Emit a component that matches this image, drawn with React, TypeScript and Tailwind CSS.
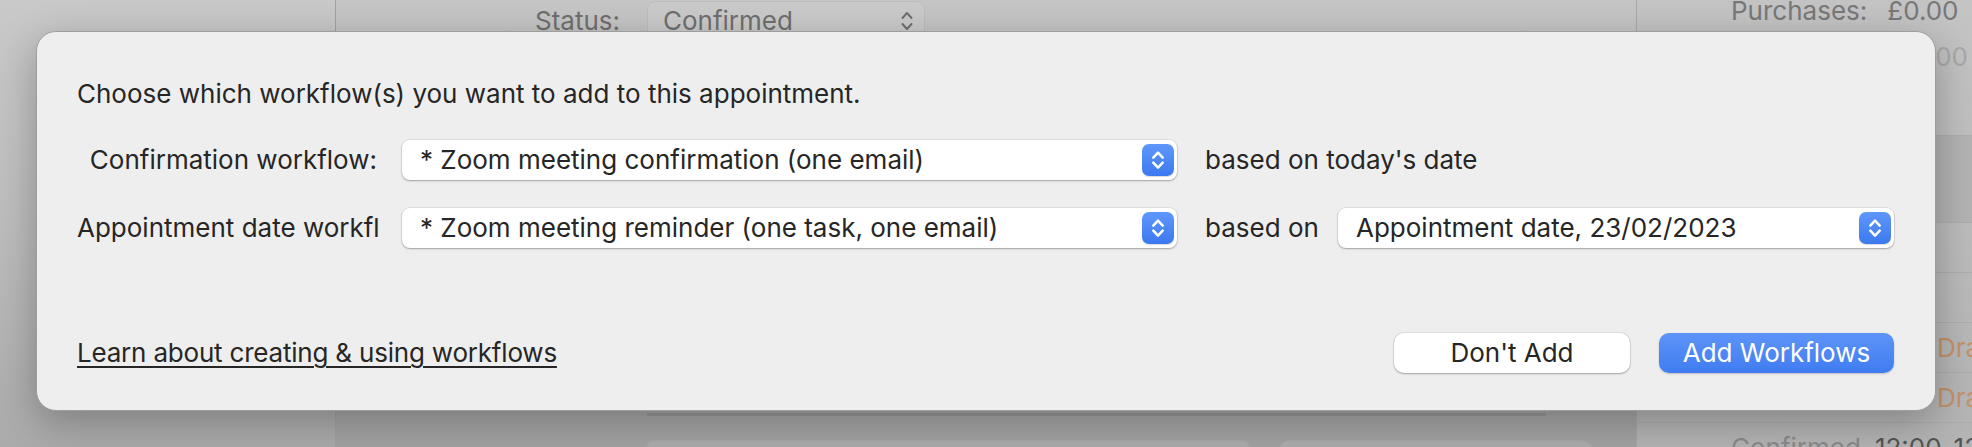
import { FC, ReactNode } from "react";

const Stepper: FC = () => (
    <div className="flex h-[32px] w-[32px] items-center justify-center rounded-[7px] bg-gradient-to-b from-[#5f97fa] to-[#3c79ef] shadow-[0_1px_1px_rgba(0,0,0,0.15)]">
        <svg width="32" height="32" viewBox="0 0 32 32" fill="none">
            <path
                d="M11.3 13.6 L16 8.6 L20.7 13.6"
                stroke="white"
                strokeWidth="2.5"
                strokeLinecap="round"
                strokeLinejoin="round"
            />
            <path
                d="M11.3 18.6 L16 23.6 L20.7 18.6"
                stroke="white"
                strokeWidth="2.5"
                strokeLinecap="round"
                strokeLinejoin="round"
            />
        </svg>
    </div>
);

const PopUp: FC<{ value: string; className?: string }> = ({ value, className }) => (
    <div
        className={`flex h-[40px] shrink-0 items-center justify-between rounded-[8px] bg-white pl-[18px] pr-[3px] shadow-[0_0_0_1px_rgba(0,0,0,0.06),0_1px_2px_rgba(0,0,0,0.28)] ${className ?? ""}`}
    >
        <span className="whitespace-nowrap">{value}</span>
        <Stepper />
    </div>
);

const Label: FC<{ children: ReactNode }> = ({ children }) => (
    <div className="w-[303px] shrink-0 overflow-hidden whitespace-nowrap pr-[3px] text-right">
        {children}
    </div>
);

const Backdrop: FC = () => (
    <div className="flex h-full w-full">
        {/* sidebar */}
        <div className="h-full w-[336px] shrink-0 border-r border-[#a2a2a2] bg-gradient-to-b from-[#c9c9c9] via-[#bdbdbd] to-[#ababab]" />

        {/* main window */}
        <div className="flex h-full w-[1300px] shrink-0 flex-col overflow-hidden bg-gradient-to-b from-[#c6c6c6] via-[#b9b9b9] to-[#a3a3a3] pl-[311px]">
            <div className="relative flex h-[41px] shrink-0 items-center">
                <span className="absolute right-[100%] mr-[27px] whitespace-nowrap text-[#6f6f6f]">
                    Status:
                </span>
                <div className="mt-[1px] flex h-[40px] w-[278px] items-center justify-between rounded-[8px] border border-[#bdbdbd] bg-[#cacaca] pl-[15px] pr-[10px] text-[#6f6f6f]">
                    <span>Confirmed</span>
                    <svg width="14" height="24" viewBox="0 0 14 24" fill="none">
                        <path d="M2.5 9 L7 4 L11.5 9" stroke="#6f6f6f" strokeWidth="2" strokeLinecap="round" strokeLinejoin="round" />
                        <path d="M2.5 15 L7 20 L11.5 15" stroke="#6f6f6f" strokeWidth="2" strokeLinecap="round" strokeLinejoin="round" />
                    </svg>
                </div>
            </div>
            <div className="h-[375px] w-[899px] shrink-0 border-b-[3px] border-[#979797]" />
            <div className="mt-[24px] flex shrink-0 gap-[30px]">
                <div className="h-[30px] w-[602px] rounded-t-[6px] border border-[#a9a9a9] bg-[#adadad]" />
                <div className="h-[30px] w-[313px] rounded-t-[10px] border border-[#a9a9a9] bg-[#adadad]" />
            </div>
        </div>

        {/* inspector */}
        <div className="flex h-full min-w-0 flex-1 flex-col overflow-hidden border-l border-[#a9a9a9] bg-gradient-to-b from-[#c4c4c4] to-[#b4b4b4]">
            <div className="h-[135px] shrink-0 pl-[94px]">
                <div className="-mt-[5px] flex h-[32px] items-center whitespace-nowrap text-[#787878]">
                    <span>Purchases:</span>
                    <span className="ml-[20px]">£0.00</span>
                </div>
                <div className="mt-[14px] flex h-[32px] items-center justify-end whitespace-nowrap pr-[4px] text-[#a8a8a8]">
                    £0.00
                </div>
            </div>
            <div className="h-[87px] shrink-0 border-t border-[#adadad] bg-[#b3b3b3]" />
            <div className="h-[50px] shrink-0 border-t border-[#adadad]" />
            <div className="h-[50px] shrink-0 border-t border-[#adadad]" />
            <div className="flex h-[50px] shrink-0 items-center whitespace-nowrap border-t border-[#adadad] pl-[300px] text-[#c4926b]">
                Draft
            </div>
            <div className="flex h-[50px] shrink-0 items-center whitespace-nowrap border-t border-[#adadad] pl-[300px] text-[#c4926b]">
                Draft
            </div>
            <div className="flex h-[50px] shrink-0 items-center whitespace-nowrap border-t border-[#adadad] pl-[94px]">
                <span className="text-[#8a8a8a]">Confirmed</span>
                <span className="ml-[14px] text-[#555555]">12:00-12:30</span>
            </div>
        </div>
    </div>
);

const WorkflowSheet: FC = () => (
    <div className="absolute left-[36px] top-[31px] flex h-[380px] w-[1900px] flex-col rounded-[20px] border border-[#9e9e9e] bg-[#eeeeee] pl-[40px] pr-[41px] pt-[46px] text-[#262626] shadow-[0_12px_40px_rgba(0,0,0,0.28)]">
        <p className="h-[32px] shrink-0 leading-[32px]">
            Choose which workflow(s) you want to add to this appointment.
        </p>

        <div className="mt-[30px] flex shrink-0 items-center">
            <Label>Confirmation workflow:</Label>
            <PopUp className="ml-[22px] w-[775px]" value="* Zoom meeting confirmation (one email)" />
            <span className="ml-[28px] whitespace-nowrap">based on today's date</span>
        </div>

        <div className="mt-[28px] flex shrink-0 items-center">
            <Label>Appointment date workflow:</Label>
            <PopUp className="ml-[22px] w-[775px]" value="* Zoom meeting reminder (one task, one email)" />
            <span className="ml-[28px] whitespace-nowrap">based on</span>
            <PopUp className="ml-auto w-[556px]" value="Appointment date, 23/02/2023" />
        </div>

        <div className="mt-[85px] flex shrink-0 items-center justify-between">
            <a className="cursor-pointer tracking-[-0.2px] underline decoration-2 underline-offset-[4px]">
                Learn about creating &amp; using workflows
            </a>
            <div className="flex gap-[29px]">
                <button
                    type="button"
                    className="h-[40px] w-[236px] rounded-[10px] bg-white shadow-[0_0_0_1px_rgba(0,0,0,0.06),0_1px_2px_rgba(0,0,0,0.28)]"
                >
                    Don't Add
                </button>
                <button
                    type="button"
                    className="h-[40px] w-[235px] rounded-[10px] bg-gradient-to-b from-[#5e94f8] to-[#3f7cf1] text-white shadow-[0_1px_2px_rgba(0,0,0,0.2)]"
                >
                    Add Workflows
                </button>
            </div>
        </div>
    </div>
);

export default function App() {
    return (
        <div className="relative h-[447px] w-[1972px] overflow-hidden font-['Inter','Liberation_Sans',sans-serif] text-[26px] leading-[32px]">
            <Backdrop />
            <WorkflowSheet />
        </div>
    );
}
